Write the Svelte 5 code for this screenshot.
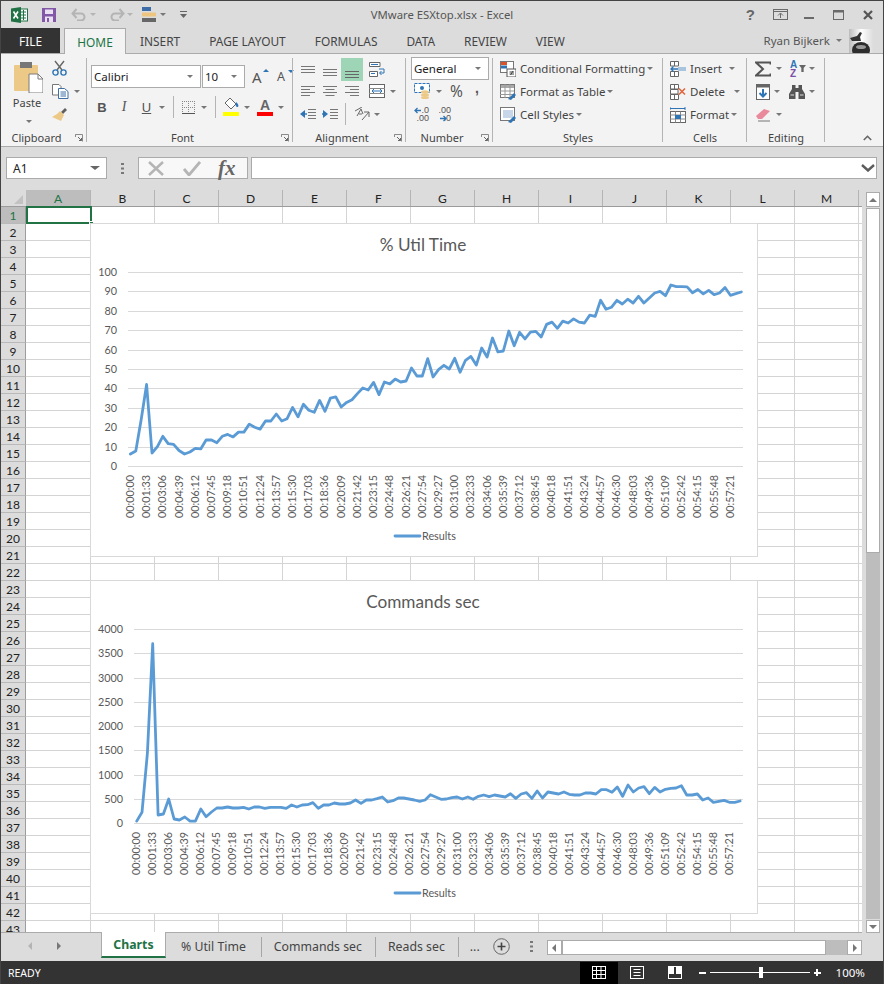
<script>
  const util = [6.2,7.7,24,42,6.7,10,15.3,11.5,11.2,8,6.2,7.2,9.1,8.8,13.4,13.4,12,15.3,16.3,15,17.5,17.5,21.6,20,19,23.2,23.2,26.8,23.2,24.4,30.2,25.3,31.8,28.7,27.7,33.8,28.2,35,35.6,30.4,32.8,34.2,37.3,40.2,39.2,43.1,36.8,43.3,42.3,44.8,43.3,43.8,50.5,46.4,46.4,55.3,45.9,49.7,51.9,50,55.5,48.3,54.5,56.5,52,60.8,56.2,66,58.8,59.3,69.6,62,68.9,65.5,69,69.4,66.5,73,74.2,71,74.7,73.7,75.8,74.2,73.7,77.8,77.1,85.4,80.8,81.8,85.4,83.5,86,84,87.5,84,86.6,89.2,90,87.8,93.3,92.4,92.4,92.3,89.3,91,88.7,90.5,88.3,89.2,92,88,88.8,89.7];
  const cmds = [40,220,1440,3697,165,185,495,82,62,124,40,40,288,130,227,309,309,330,309,309,323,288,330,330,302,323,323,323,302,371,330,371,378,420,302,371,371,412,392,392,412,474,405,474,474,501,536,433,460,515,515,495,474,447,474,584,536,488,495,522,536,495,536,488,550,577,543,577,556,536,605,508,598,625,508,660,515,639,618,598,639,591,577,577,618,618,598,687,687,632,742,550,783,639,721,749,605,735,639,694,714,721,769,577,577,598,474,515,426,447,467,426,426,453];

  const pad = (n) => String(n).padStart(2, '0');
  const times = Array.from({ length: 38 }, (_, i) => {
    const s = i * 93;
    return `00:${pad(Math.floor(s / 60))}:${pad(s % 60)}`;
  });

  function chart(title, data, max, step, x0, x1, first, dx, zeroY, span, axisRight) {
    const px = (i) => first + dx * i;
    const py = (v) => zeroY - (v / max) * span;
    const ticks = [];
    for (let v = 0; v <= max; v += step) ticks.push({ v, y: Math.round(py(v)) + 0.5 });
    return {
      title, x0, x1, axisRight, zeroY, ticks,
      points: data.map((v, i) => `${px(i).toFixed(1)},${py(v).toFixed(1)}`).join(' '),
      labels: times.map((t, i) => ({ t, x: px(i * 3) + 3.5 }))
    };
  }

  const c1 = chart('% Util Time', util, 100, 10, 37, 652, 39.4, 5.405, 242, 194, 26);
  const c2 = chart('Commands sec', cmds, 4000, 500, 43, 652, 45.7, 5.34, 242, 194, 32);

  const cols = ['A','B','C','D','E','F','G','H','I','J','K','L','M'];
  const rows = Array.from({ length: 43 }, (_, i) => i + 1);
</script>

{#snippet plot(c)}
  <svg class="plot" width="666" height="332" viewBox="0 0 666 332">
    <text class="ctitle" x="332" y="27" text-anchor="middle">{c.title}</text>
    {#each c.ticks as t}
      <line class="gl" x1={c.x0} x2={c.x1} y1={t.y} y2={t.y} />
      <text class="tick" x={c.axisRight} y={t.y + 3.5} text-anchor="end">{t.v}</text>
    {/each}
    <polyline class="series" points={c.points} />
    {#each c.labels as l}
      <text class="tick" text-anchor="end" transform="translate({l.x} 251) rotate(-90)">{l.t}</text>
    {/each}
    <line class="leg" x1="304" x2="329" y1="312" y2="312" />
    <text class="tick" x="331" y="316">Results</text>
  </svg>
{/snippet}

{#snippet launcher()}
  <svg class="launch" width="8" height="8" viewBox="0 0 8 8"><path d="M.5 .5H7.5V7.5M.5 .5V3M.5 .5H3" fill="none" stroke="#8a8a8a"/><path d="M3 3L6.5 6.5M4 6.5H6.5V4" fill="none" stroke="#666"/></svg>
{/snippet}

<div class="win">
  <header class="titlebar">
    <div class="qat">
      <svg width="17" height="16" viewBox="0 0 17 16"><rect x="8" y="2" width="8.5" height="12" fill="#fff" stroke="#207245"/><path d="M10 5h5M10 8h5M10 11h5M12.5 3v10" stroke="#207245"/><path d="M0 1.6L10 0V16L0 14.4z" fill="#207245"/><path d="M2.5 4.5L7 11.5M7 4.5L2.5 11.5" stroke="#fff" stroke-width="1.6"/></svg>
      <svg class="ml14" width="14" height="14" viewBox="0 0 14 14"><rect width="14" height="14" fill="#8257a8"/><rect x="3" y="1.5" width="8" height="4.5" fill="#e9e0f1"/><rect x="3" y="8.5" width="8" height="5.5" fill="#e9e0f1"/><rect x="5" y="10" width="2" height="4" fill="#8257a8"/></svg>
      <svg class="ml15" width="15" height="13" viewBox="0 0 15 13"><path d="M2 5.5H10a3.5 3.5 0 0 1 0 7H6M5.5 1L1.5 5.5L5.5 10" fill="none" stroke="#b4b4b4" stroke-width="2"/></svg>
      <span class="caret light ml4"></span>
      <svg class="ml14" width="15" height="13" viewBox="0 0 15 13"><path d="M13 5.5H5a3.5 3.5 0 0 0 0 7H9M9.5 1L13.5 5.5L9.5 10" fill="none" stroke="#b4b4b4" stroke-width="2"/></svg>
      <span class="caret light ml2"></span>
      <svg class="ml9" width="14" height="15" viewBox="0 0 14 15"><rect width="9" height="4" fill="#3e6da8"/><rect y="5.5" width="14" height="4" fill="#eec57e"/><rect y="11" width="14" height="4" fill="#666"/></svg>
      <span class="caret ml4"></span>
      <svg class="ml14" width="7" height="7" viewBox="0 0 7 7"><path d="M0 .5H7" stroke="#666"/><path d="M0 3H7L3.5 7z" fill="#666"/></svg>
    </div>
    <div class="doc">VMware ESXtop.xlsx - Excel</div>
    <div class="winbtns">
      <span class="help">?</span>
      <svg class="restore" width="15" height="11" viewBox="0 0 15 11"><rect x=".5" y=".5" width="14" height="10" fill="none" stroke="#6a6a6a"/><path d="M.5 2.5H14.5" stroke="#6a6a6a"/><path d="M7.5 9V4.5M5 6.5L7.5 4L10 6.5" fill="none" stroke="#6a6a6a"/></svg>
      <svg width="10" height="10" viewBox="0 0 10 10"><rect y="7" width="10" height="2" fill="#6a6a6a"/></svg>
      <svg width="11" height="10" viewBox="0 0 11 10"><rect x=".5" y=".5" width="10" height="9" fill="none" stroke="#6a6a6a"/><rect width="11" height="2.5" fill="#6a6a6a"/></svg>
      <svg width="10" height="10" viewBox="0 0 10 10"><path d="M1 1L9 9M9 1L1 9" stroke="#555" stroke-width="2.2"/></svg>
    </div>
  </header>

  <nav class="tabs">
    <span class="file">FILE</span>
    <span class="home">HOME</span>
    <span class="tab first">INSERT</span>
    <span class="tab">PAGE LAYOUT</span>
    <span class="tab">FORMULAS</span>
    <span class="tab">DATA</span>
    <span class="tab">REVIEW</span>
    <span class="tab">VIEW</span>
    <span class="user">Ryan Bijkerk</span>
    <span class="caret ml6"></span>
    <svg class="avatar" width="24" height="24" viewBox="0 0 24 24">
      <defs><linearGradient id="av" x1="0" x2="1"><stop offset="0" stop-color="#bbb"/><stop offset=".5" stop-color="#fff"/><stop offset="1" stop-color="#ddd"/></linearGradient></defs>
      <rect width="24" height="24" fill="url(#av)"/>
      <ellipse cx="12" cy="21" rx="9" ry="8" fill="#2d2d2d"/>
      <ellipse cx="12" cy="18" rx="5" ry="2" fill="#999"/>
      <path d="M1 9L8 7L11 3L13 4L11 8L12 12L3 12z" fill="#333"/>
    </svg>
  </nav>

  <section class="ribbon">
    <div class="group clip">
      <div class="clipbody">
        <div class="paste">
          <svg width="29" height="31" viewBox="0 0 29 31"><rect y="3" width="24" height="26" rx="1" fill="#edc987"/><rect x="6" y="0" width="12" height="6" fill="#777"/><path d="M15 12H24L29 17V31H15z" fill="#fff" stroke="#7a7a7a"/><path d="M24 12V17H29" fill="none" stroke="#7a7a7a"/></svg>
          <span class="pastelabel">Paste</span>
          <span class="caret"></span>
        </div>
        <div class="clipsmall">
          <svg width="15" height="16" viewBox="0 0 15 16"><path d="M3 1L10 10M12 1L5 10" stroke="#666" stroke-width="1.4"/><circle cx="3.5" cy="12.5" r="2.6" fill="none" stroke="#2f75b5" stroke-width="1.4"/><circle cx="11.5" cy="12.5" r="2.6" fill="none" stroke="#2f75b5" stroke-width="1.4"/></svg>
          <div class="row4"><svg width="17" height="15" viewBox="0 0 17 15"><path d="M.5 .5H7L9 2.5V11H.5z" fill="#fff" stroke="#777"/><path d="M6.5 4.5H12.5L16 7.5V14.5H6.5z" fill="#fff" stroke="#3f6ea5"/><path d="M8.5 8H14M8.5 10H14M8.5 12H14" stroke="#3f6ea5"/></svg><span class="caret ml5"></span></div>
          <svg width="16" height="14" viewBox="0 0 16 14"><path d="M9 5L13 1L15 3L11 7z" fill="#5f5f5f"/><path d="M8 4L12 8L9 14L0 10L5 7z" fill="#edc987"/></svg>
        </div>
      </div>
      <div class="glabel lg">Clipboard</div>
      {@render launcher()}
    </div>

    <div class="group font">
      <div class="frow1">
        <div class="combo w110"><span>Calibri</span><span class="caret"></span></div>
        <div class="combo w43"><span>10</span><span class="caret"></span></div>
        <span class="growa ml6">A<i class="up"></i></span>
        <span class="growa small ml10">A<i class="down"></i></span>
      </div>
      <div class="frow2">
        <span class="fmt b">B</span><span class="fmt it">I</span><span class="fmt u">U</span>
        <span class="caret ml1"></span>
        <span class="vsep s8"></span>
        <svg class="ml8" width="13" height="13" viewBox="0 0 13 13"><path d="M.5 0V13M6.5 0V13M12.5 0V13M0 .5H13M0 6.5H13" stroke="#888" stroke-dasharray="1 1"/><path d="M0 12.5H13" stroke="#555"/></svg>
        <span class="caret ml6"></span>
        <span class="vsep s8"></span>
        <div class="colorbtn ml7">
          <svg width="16" height="12" viewBox="0 0 16 12"><path d="M2 5L7 0L13 6L8 11z" fill="#fff" stroke="#666"/><path d="M13 4c2 2 3 3 2 5c-2 0-3-1-2-5z" fill="#2f75b5"/></svg>
          <i class="bar yellow"></i>
        </div>
        <span class="caret ml5"></span>
        <div class="colorbtn ml7">
          <span class="fa">A</span>
          <i class="bar red"></i>
        </div>
        <span class="caret ml5"></span>
      </div>
      <div class="glabel lg">Font</div>
      {@render launcher()}
    </div>

    <div class="group align">
      <div class="agrid">
        <svg width="14" height="8" viewBox="0 0 14 8"><path d="M0 .5H14M0 3.5H14M0 6.5H14" stroke="#777"/></svg>
        <svg class="mid" width="14" height="8" viewBox="0 0 14 8"><path d="M0 .5H14M0 3.5H14M0 6.5H14" stroke="#777"/></svg>
        <span class="hl"><svg width="14" height="8" viewBox="0 0 14 8"><path d="M0 .5H14M0 3.5H14M0 6.5H14" stroke="#666"/></svg></span>
        <svg width="17" height="15" viewBox="0 0 17 15"><path d="M.5 .5H11V4.5H.5zM.5 9.5H8.5V14.5H.5z" fill="#fff" stroke="#666"/><path d="M2 2.5H9M2 11.5H6" stroke="#2f75b5"/><path d="M10 7H15V11H11M12.5 9L10.5 11L12.5 13" fill="none" stroke="#2f75b5"/></svg>
      </div>
      <div class="agrid r2">
        <svg width="14" height="11" viewBox="0 0 14 11"><path d="M0 .5H14M0 3.5H9M0 6.5H14M0 9.5H9" stroke="#777"/></svg>
        <svg width="14" height="11" viewBox="0 0 14 11"><path d="M0 .5H14M2.500 3.5H11.500M0 6.5H14M2.500 9.500H11.500" stroke="#777"/></svg>
        <svg width="14" height="11" viewBox="0 0 14 11"><path d="M0 .5H14M5 3.5H14M0 6.5H14M5 9.5H14" stroke="#777"/></svg>
        <div class="row4"><svg width="16" height="14" viewBox="0 0 16 14"><rect x=".5" y=".5" width="15" height="13" fill="#fff" stroke="#666"/><path d="M0 4.500H16M0 9.500H16" stroke="#888"/><rect x="1" y="5" width="14" height="4" fill="#fff"/><path d="M3 7H13" stroke="#2f75b5"/><path d="M5 5L3 7L5 9M11 5L13 7L11 9" fill="none" stroke="#2f75b5"/></svg><span class="caret ml5"></span></div>
      </div>
      <div class="agrid r3">
        <svg width="16" height="10" viewBox="0 0 16 10"><path d="M0 5L5 1V9z" fill="#2f75b5"/><path d="M3 5H7" stroke="#2f75b5" stroke-width="1.4"/><path d="M8 .5H16M8 3.500H16M8 6.500H16M8 9.500H16" stroke="#777"/></svg>
        <svg width="16" height="10" viewBox="0 0 16 10"><path d="M6 5L1 1V9z" fill="#2f75b5"/><path d="M3 5H0" stroke="#2f75b5" stroke-width="1.4"/><path d="M8 .5H16M8 3.500H16M8 6.500H16M8 9.500H16" stroke="#777"/></svg>
        <span class="vsep tall"></span>
        <div class="row4"><svg width="18" height="14" viewBox="0 0 18 14"><path d="M2 4L9 0M4 9L8 2L10 7M6 7H9" fill="none" stroke="#666"/><path d="M9 13L16 5M11 5H16V10" fill="none" stroke="#666"/></svg><span class="caret ml3"></span></div>
      </div>
      <div class="glabel lg">Alignment</div>
      {@render launcher()}
    </div>

    <div class="group num">
      <div class="combo w78"><span>General</span><span class="caret"></span></div>
      <div class="nrow">
        <svg width="17" height="16" viewBox="0 0 17 16"><rect x=".5" y=".5" width="15" height="9" fill="#fff" stroke="#2f75b5" stroke-dasharray="3 1"/><circle cx="8" cy="5" r="2" fill="#2f75b5"/><ellipse cx="11" cy="9" rx="4" ry="1.7" fill="#edc987"/><ellipse cx="11" cy="12" rx="4" ry="1.7" fill="#edc987"/><ellipse cx="11" cy="14.500" rx="4" ry="1.500" fill="#edc987"/></svg>
        <span class="caret ml5"></span>
        <span class="pct">%</span>
        <span class="comma">,</span>
      </div>
      <div class="nrow r3">
        <div class="dec">.0<br />.00<svg width="7" height="7" viewBox="0 0 7 7"><path d="M7 3.500H1M3.500 1L1 3.500L3.500 6" fill="none" stroke="#2f75b5" stroke-width="1.3"/></svg></div>
        <div class="dec two">.00<br />.0<svg width="7" height="7" viewBox="0 0 7 7"><path d="M0 3.500H6M3.500 1L6 3.500L3.500 6" fill="none" stroke="#2f75b5" stroke-width="1.3"/></svg></div>
      </div>
      <div class="glabel lg">Number</div>
      {@render launcher()}
    </div>

    <div class="group styles">
      <div class="lrow">
        <svg width="16" height="16" viewBox="0 0 16 16"><rect x=".5" y=".5" width="13" height="11" fill="#fff" stroke="#777"/><rect x="1" y="1" width="6" height="3" fill="#d9542b"/><rect x="1" y="4.500" width="6" height="3" fill="#2f75b5"/><rect x="7" y="8" width="9" height="8" fill="#fff" stroke="#555"/><path d="M9.500 11H14M9.500 13H14M13 10L10.500 14" stroke="#444"/></svg>
        <span>Conditional Formatting</span><span class="caret"></span>
      </div>
      <div class="lrow">
        <svg width="16" height="16" viewBox="0 0 16 16"><rect x=".5" y=".5" width="14" height="13" fill="#fff" stroke="#777"/><rect x="1" y="1" width="13" height="3" fill="#a9a9a9"/><path d="M5 0V14M10 0V14M0 7H14M0 10.500H14" stroke="#999"/><path d="M8 15L14 9L16 11L11 16z" fill="#2f75b5"/></svg>
        <span>Format as Table</span><span class="caret"></span>
      </div>
      <div class="lrow">
        <svg width="16" height="16" viewBox="0 0 16 16"><rect x=".5" y=".5" width="14" height="13" fill="#fff" stroke="#777"/><rect x="3" y="3" width="10" height="8" fill="#c7d6e8"/><path d="M8 15L14 9L16 11L11 16z" fill="#2f75b5"/></svg>
        <span>Cell Styles</span><span class="caret"></span>
      </div>
      <div class="glabel">Styles</div>
    </div>

    <div class="group cells">
      <div class="lrow">
        <svg width="16" height="16" viewBox="0 0 16 16"><path d="M.5 .5H8.500V5H.5zM.5 10.500H8.500V15.500H.5zM4.500 .5V5M4.500 10.500V15.500" fill="#fff" stroke="#666"/><rect x="8" y="6" width="8" height="4" fill="#a9c4df"/><path d="M8 8H1M3.500 5.500L1 8L3.500 10.500" fill="none" stroke="#2f75b5" stroke-width="1.300"/></svg>
        <span>Insert</span><span class="caret c-ins"></span>
      </div>
      <div class="lrow">
        <svg width="16" height="16" viewBox="0 0 16 16"><path d="M.5 .5H8.500V5H.5zM.5 10.500H8.500V15.500H.5zM4.500 .5V5M4.500 10.500V15.500M.5 5.500H8V10H.5z" fill="#fff" stroke="#666"/><path d="M9 4.500L15 10.500M15 4.500L9 10.500" stroke="#e0663d" stroke-width="1.600"/></svg>
        <span>Delete</span><span class="caret c-del"></span>
      </div>
      <div class="lrow">
        <svg width="16" height="16" viewBox="0 0 16 16"><path d="M0 1.500H15M0 0V3M15 0V3" stroke="#2f75b5"/><rect x=".5" y="4.500" width="15" height="11" fill="#fff" stroke="#666"/><path d="M5.500 4.500V15.500M10.500 4.500V15.500M0 8H16M0 12H16" stroke="#888"/><rect x="5" y="8" width="6" height="4" fill="#2f75b5"/></svg>
        <span>Format</span><span class="caret"></span>
      </div>
      <div class="glabel">Cells</div>
    </div>

    <div class="group edit">
      <div class="erow">
        <svg width="16" height="16" viewBox="0 0 16 16"><path d="M15.500 3.500V1.500H1L8 8L1 14.500H15.500V12.500" fill="none" stroke="#555" stroke-width="2"/></svg>
        <span class="caret ml5"></span>
        <div class="sort ml8"><span class="az a">A</span><span class="az z">Z</span></div>
        <svg class="ml1" width="7" height="7" viewBox="0 0 9 9"><path d="M0 0H9L6 4V9H3V4z" fill="#666"/></svg>
        <span class="caret ml3"></span>
      </div>
      <div class="erow">
        <svg class="ml1" width="14" height="16" viewBox="0 0 14 16"><rect x=".5" y=".5" width="13" height="15" fill="#fff" stroke="#666"/><rect x="1" y="1" width="12" height="2.500" fill="#666"/><path d="M7 5V12M3.500 9L7 12.500L10.500 9" fill="none" stroke="#2f75b5" stroke-width="2"/></svg>
        <span class="caret ml4"></span>
        <svg class="ml9" width="16" height="14" viewBox="0 0 16 14"><path d="M3 0H6.500V3H9.500V0H13V4L16 9V14H9.500V7H6.500V14H0V9L3 4z" fill="#555"/><path d="M1.500 10H5M11 10H14.500" stroke="#ddd"/></svg>
        <span class="caret ml4"></span>
      </div>
      <div class="erow">
        <svg class="ml1" width="15" height="14" viewBox="0 0 15 14"><path d="M0 8L8 1L14 3L6 11H2z" fill="#e9899b"/><path d="M2 13H14" stroke="#777"/></svg>
        <span class="caret ml5"></span>
      </div>
      <div class="glabel">Editing</div>
    </div>

    <svg class="collapse" width="9" height="6" viewBox="0 0 9 6"><path d="M.8 5L4.500 1.300L8.200 5" fill="none" stroke="#666" stroke-width="1.600"/></svg>
  </section>

  <section class="fbar">
    <div class="namebox"><span>A1</span><span class="caret big"></span></div>
    <svg class="dots" width="3" height="11" viewBox="0 0 3 11"><path d="M0 0h3v2h-3zM0 4.500h3v2h-3zM0 9h3v2h-3z" fill="#777"/></svg>
    <div class="fxbox">
      <svg width="16" height="15" viewBox="0 0 16 15"><path d="M1 1L15 14M15 1L1 14" stroke="#b5b5b5" stroke-width="2.500"/></svg>
      <svg width="18" height="15" viewBox="0 0 18 15"><path d="M1 8L6 14L17 1" fill="none" stroke="#b5b5b5" stroke-width="2.800"/></svg>
      <span class="fx">fx</span>
    </div>
    <div class="finput"><svg width="14" height="8" viewBox="0 0 14 8"><path d="M1 1L7 6.500L13 1" fill="none" stroke="#5c5c5c" stroke-width="2.400"/></svg></div>
  </section>

  <section class="sheet">
    <div class="main">
      <div class="colhead">
        <div class="corner"><i></i></div>
        {#each cols as c, i}
          <div class="ch" class:sel={i === 0}>{c}</div>
        {/each}
        <div class="ch rest"></div>
      </div>
      <div class="body">
        {#each rows as r}
          <div class="row">
            <div class="rh" class:sel={r === 1}>{r}</div>
            {#each cols as c, i}
              <div class="cell" class:cola={i === 0}></div>
            {/each}
            <div class="cell rest"></div>
          </div>
        {/each}
        <div class="active"><i></i></div>
        <div class="chartbox one">{@render plot(c1)}</div>
        <div class="chartbox two">{@render plot(c2)}</div>
      </div>
    </div>
    <div class="vscroll">
      <div class="vbtn"><i class="tri-up"></i></div>
      <div class="vtrack"><div class="vthumb"></div></div>
      <div class="vbtn low"><i class="tri-down"></i></div>
    </div>
  </section>

  <section class="sheetbar">
    <i class="tri-left pale"></i>
    <i class="tri-right dark"></i>
    <span class="stab active-tab">Charts</span>
    <span class="stab util">% Util Time</span>
    <span class="stab sep">Commands sec</span>
    <span class="stab sep">Reads sec</span>
    <span class="stab sep more">...</span>
    <svg class="plus" width="17" height="17" viewBox="0 0 17 17"><circle cx="8.500" cy="8.500" r="7.800" fill="none" stroke="#666"/><path d="M8.500 4.500V12.500M4.500 8.500H12.500" stroke="#444" stroke-width="1.600"/></svg>
    <svg class="hdots" width="3" height="11" viewBox="0 0 3 11"><path d="M0 0h3v2h-3zM0 4.500h3v2h-3zM0 9h3v2h-3z" fill="#777"/></svg>
    <div class="hscroll">
      <div class="hbtn"><i class="tri-left dark"></i></div>
      <div class="hthumb"></div>
      <div class="htrack"></div>
      <div class="hbtn"><i class="tri-right dark"></i></div>
    </div>
  </section>

  <footer class="status">
    <span class="ready">READY</span>
    <div class="view on"><svg width="14" height="13" viewBox="0 0 14 13"><path d="M.5 0V13M4.500 0V13M9 0V13M13.500 0V13M0 .5H14M0 4.500H14M0 8.500H14M0 12.500H14" stroke="#fff"/></svg></div>
    <div class="view"><svg width="14" height="13" viewBox="0 0 14 13"><rect x=".5" y=".5" width="13" height="12" fill="none" stroke="#fff"/><path d="M3.500 3.500H10.500M3.500 6.500H10.500M3.500 9.500H10.500" stroke="#fff"/></svg></div>
    <div class="view"><svg width="14" height="13" viewBox="0 0 14 13"><rect x=".5" y=".5" width="13" height="12" fill="none" stroke="#fff"/><path d="M1 0H6V8H1zM8 0H13V8H8z" fill="#fff"/></svg></div>
    <div class="zoomer">
      <span class="zb minus"></span>
      <div class="slider"><i></i></div>
      <span class="zb plusz"></span>
    </div>
    <span class="pctz">100%</span>
  </footer>
</div>

<style>
  :global(body) { margin: 0; background: #fff; }
  .win {
    width: 884px; height: 984px; box-sizing: border-box; overflow: hidden;
    display: flex; flex-direction: column; background: #dcdcdc;
    border: 1px solid #444; border-width: 1px 1px 0 1px;
    font-family: "Noto Sans", "Open Sans", sans-serif; font-size: 11.5px; color: #444;
  }
  svg { display: block; flex: none; }
  .ml1 { margin-left: 1px; } .ml2 { margin-left: 2px; } .ml3 { margin-left: 3px; } .ml4 { margin-left: 4px; }
  .ml5 { margin-left: 5px; } .ml6 { margin-left: 6px; } .ml7 { margin-left: 7px; } .ml8 { margin-left: 8px; }
  .ml9 { margin-left: 9px; } .ml10 { margin-left: 10px; } .ml14 { margin-left: 14px; } .ml15 { margin-left: 15px; }
  .caret { display: inline-block; flex: none; width: 0; height: 0; border: 3px solid transparent; border-top: 3px solid #777; border-bottom: 0; }
  .caret.light { border-top-color: #b4b4b4; }
  .caret.big { border-width: 4px 5px 0; border-top-color: #666; }

  .titlebar { height: 27px; display: grid; grid-template-columns: 1fr auto 1fr; align-items: center; flex: none; }
  .qat { display: flex; align-items: center; padding-left: 10px; }
  .doc { font-size: 11.3px; color: #555; }
  .winbtns { display: flex; align-items: center; justify-content: flex-end; gap: 19px; padding-right: 10px; }
  .help { font: bold 15px "Liberation Sans", sans-serif; color: #666; margin-right: -1px; }
  .restore { margin-right: -3px; }

  .tabs { height: 25px; display: flex; align-items: center; flex: none; font-size: 11.9px; color: #444; position: relative; z-index: 1; }
  .file { width: 59px; height: 25px; background: #333; color: #fff; display: flex; align-items: center; justify-content: center; }
  .home { width: 60px; height: 25px; margin-left: 4px; margin-bottom: -1px; box-sizing: content-box; background: #f3f3f3; color: #217346; display: flex; align-items: center; justify-content: center; border: 1px solid #ababab; border-bottom: 0; }
  .tab { margin-left: 29px; white-space: nowrap; }
  .tab.first { margin-left: 14px; }
  .user { margin-left: auto; color: #555; font-size: 11.5px; }
  .avatar { margin: 0 10px 0 7px; }

  .ribbon { height: 92px; box-sizing: content-box; flex: none; display: flex; padding-top: 0; background: #f3f3f3; border-top: 1px solid #ababab; border-bottom: 1px solid #ababab; position: relative; color: #444; }
  .group { position: relative; box-sizing: border-box; height: 92px; padding-top: 4px; flex: none; }
  .group::after { content: ""; position: absolute; right: 0; top: 4px; height: 84px; width: 1px; background: #b4b4b4; }
  .glabel { position: absolute; left: 0; right: 0; bottom: 0; height: 16px; line-height: 16px; text-align: center; font-size: 11px; color: #444; }
  .glabel.lg { right: 15px; }
  .launch { position: absolute; right: 4px; bottom: 4px; }
  .row4 { display: flex; align-items: center; }
  .vsep { display: block; flex: none; width: 1px; background: #b4b4b4; height: 22px; }
  .vsep.s8 { margin-left: 8px; }

  .clip { width: 86px; }
  .clipbody { display: flex; padding: 4px 0 0 13px; }
  .paste { width: 29px; display: flex; flex-direction: column; align-items: center; }
  .pastelabel { margin: 0 3px 0 0; line-height: 20px; font-size: 11px; }
  .paste .caret { margin-top: 7px; }
  .clipsmall { margin: -2px 0 0 9px; display: flex; flex-direction: column; gap: 8px; }

  .font { width: 206px; padding-left: 4px; }
  .frow1 { display: flex; align-items: center; margin-top: 7px; gap: 1px; }
  .combo { box-sizing: border-box; height: 23px; background: #fff; border: 1px solid #ababab; display: flex; align-items: center; justify-content: space-between; padding: 0 7px 0 2px; font-size: 11.5px; color: #222; }
  .w110 { width: 110px; } .w43 { width: 43px; } .w78 { width: 78px; }
  .growa { position: relative; font-size: 15px; color: #555; width: 14px; }
  .growa.small { font-size: 12.5px; }
  .growa i { position: absolute; right: -3px; top: 2px; border: 3px solid transparent; }
  .growa i.up { border-bottom: 3px solid #2f75b5; border-top: 0; }
  .growa i.down { border-top: 3px solid #2f75b5; border-bottom: 0; }
  .frow2 { display: flex; align-items: center; height: 22px; margin-top: 8px; padding-left: 0; }
  .fmt { width: 22px; text-align: center; color: #555; font-size: 13px; font-family: "Liberation Sans", sans-serif; }
  .fmt.b { font-weight: bold; }
  .fmt.it { font-family: "Liberation Serif", serif; font-style: italic; font-size: 14px; }
  .fmt.u { text-decoration: underline; width: 23px; }
  .colorbtn { width: 16px; display: flex; flex-direction: column; align-items: center; }
  .bar { display: block; width: 16px; height: 4px; }
  .yellow { background: #ffff00; margin-top: 2px; } .red { background: #ff0000; }
  .fa { font: bold 14px/14px "Liberation Sans", sans-serif; color: #666; }

  .align { width: 113px; }
  .agrid { display: flex; align-items: center; height: 23px; padding-left: 8px; }
  .agrid > :nth-child(2) { margin-left: 8px; }
  .agrid > :nth-child(3) { margin-left: 8px; }
  .agrid > :nth-child(4) { margin-left: 10px; }
  .agrid .mid { margin-top: 6px; }
  .agrid .hl { margin: 0 0 0 4px !important; width: 22px; height: 23px; background: #9fd5b7; display: flex; align-items: flex-end; justify-content: center; padding-bottom: 2px; box-sizing: border-box; }
  .agrid .hl + svg { margin-left: 6px !important; }
  .agrid.r2 { margin-top: 3px; height: 14px; }
  .agrid.r3 { margin-top: 8px; height: 16px; padding-left: 7px; }
  .agrid.r3 > :nth-child(2) { margin-left: 6px; }
  .agrid.r3 > :nth-child(3) { margin-left: 7px; height: 22px; }
  .agrid.r3 > :nth-child(4) { margin-left: 7px; }

  .num { width: 87px; padding-left: 5px; }
  .num .combo { margin-top: -1px; }
  .nrow { display: flex; align-items: center; margin: 3px 0 0 3px; height: 16px; }
  .nrow.r3 { margin-top: 7px; height: 16px; gap: 7px; }
  .pct { font-size: 15.5px; color: #555; margin-left: 8px; }
  .comma { font: bold 14px "Liberation Sans", sans-serif; color: #555; margin: -6px 0 0 12px; }
  .dec { position: relative; width: 15px; height: 16px; font: 9px/8px "Liberation Sans", sans-serif; color: #555; text-align: right; }
  .dec svg { position: absolute; left: 0; top: 1px; }
  .dec.two svg { top: 9px; left: 4px; }

  .styles { width: 170px; padding-left: 7px; }
  .cells { width: 84px; padding-left: 7px; }
  .lrow { display: flex; align-items: center; gap: 4px; height: 17px; margin-bottom: 6px; white-space: nowrap; font-size: 11.5px; }
  .lrow:first-child { margin-top: 2px; }
  .lrow .caret { margin-left: -2px; }
  .lrow .caret.c-ins { margin-left: 3px; }
  .lrow .caret.c-del { margin-left: 5px; }

  .edit { width: 78px; padding-left: 8px; }
  .erow { display: flex; align-items: center; height: 17px; margin-bottom: 6px; }
  .erow:first-child { margin-top: 2px; }
  .sort { position: relative; width: 8px; height: 18px; font: bold 10px/9px "Liberation Sans", sans-serif; }
  .az { display: block; }
  .a { color: #2f75b5; } .z { color: #7b4fa6; }
  .collapse { position: absolute; right: 11px; top: 81px; }

  .fbar { height: 43px; flex: none; box-sizing: border-box; display: flex; align-items: flex-start; padding: 10px 6px 0 5px; }
  .namebox { width: 101px; height: 22px; box-sizing: border-box; background: #fff; border: 1px solid #ababab; display: flex; align-items: center; justify-content: space-between; padding: 0 6px; font-size: 12px; color: #222; }
  .dots { margin: 6px 0 0 14px; }
  .fxbox { margin-left: 14px; width: 110px; height: 22px; box-sizing: border-box; background: #f8f8f8; border: 1px solid #ababab; display: flex; align-items: center; padding-left: 9px; gap: 19px; }
  .fx { font: italic bold 21px/18px "Liberation Serif", serif; color: #666; margin-left: -2px; }
  .finput { margin-left: 3px; flex: 1; height: 22px; box-sizing: border-box; background: #fff; border: 1px solid #ababab; display: flex; align-items: center; justify-content: flex-end; padding-right: 1px; }

  .sheet { flex: 1; min-height: 0; display: flex; overflow: hidden; }
  .main { width: 861px; flex: none; background: #fff; overflow: hidden; border-bottom: 1px solid #ababab; box-sizing: border-box; }
  .colhead { display: flex; height: 17px; background: #dcdcdc; border-bottom: 1px solid #9c9c9c; box-sizing: border-box; }
  .corner { width: 25px; flex: none; position: relative; }
  .corner i { position: absolute; right: 3px; bottom: 2px; border-style: solid; border-width: 0 0 9px 9px; border-color: transparent transparent #c2c2c2; }
  .ch { width: 64px; flex: none; box-sizing: border-box; text-align: center; font: 12px/17px "Lato", sans-serif; color: #222; border-right: 1px solid #b4b4b4; }
  .ch.sel { width: 65px; background: #bdbdbd; color: #217346; }
  .ch.rest { width: 4px; border: 0; }
  .body { position: relative; }
  .row { display: flex; height: 17px; }
  .rh { width: 25px; flex: none; box-sizing: border-box; background: #dcdcdc; border-bottom: 1px solid #b9b9b9; font: 12px/17px "Lato", sans-serif; color: #222; text-align: center; border-right: 1px solid #9c9c9c; }
  .rh.sel { background: #bdbdbd; color: #217346; }
  .cell { width: 64px; flex: none; box-sizing: border-box; border-right: 1px solid #d4d4d4; border-bottom: 1px solid #d4d4d4; }
  .cell.cola { width: 65px; }
  .cell.rest { width: 4px; border-right: 0; }
  .active { position: absolute; left: 25px; top: -1px; width: 66px; height: 18px; box-sizing: border-box; border: 2px solid #217346; }
  .active i { position: absolute; right: -4px; bottom: -4px; width: 3px; height: 3px; background: #217346; border: 1px solid #fff; }
  .chartbox { position: absolute; left: 89px; width: 668px; height: 334px; box-sizing: border-box; background: #fff; border: 1px solid #d9d9d9; }
  .chartbox.one { top: 16px; }
  .chartbox.two { top: 373px; }
  .plot { font-family: "Lato", sans-serif; }
  .ctitle { font-size: 17.2px; fill: #595959; }
  .tick { font-size: 10.8px; fill: #595959; }
  .gl { stroke: #d9d9d9; stroke-width: 1; }
  .series { fill: none; stroke: #5b9bd5; stroke-width: 2.8; stroke-linejoin: round; stroke-linecap: round; }
  .leg { stroke: #5b9bd5; stroke-width: 2.8; stroke-linecap: round; }

  .vscroll { flex: none; width: 14px; margin-left: 4px; padding-top: 2px; display: flex; flex-direction: column; gap: 1px; }
  .vbtn { height: 15px; background: #fff; border: 1px solid #ababab; box-sizing: border-box; display: flex; align-items: center; justify-content: center; }
  .vbtn.low { height: 13px; }
  .vtrack { flex: 1; background: #bdbdbd; }
  .vthumb { height: 345px; background: #fff; border: 1px solid #ababab; box-sizing: border-box; }
  .tri-up { border: 4px solid transparent; border-bottom: 4px solid #777; border-top: 0; }
  .tri-down { border: 4px solid transparent; border-top: 4px solid #777; border-bottom: 0; }
  .tri-left { display: block; flex: none; border: 4px solid transparent; border-right: 4px solid #777; border-left: 0; }
  .tri-right { display: block; flex: none; border: 4px solid transparent; border-left: 4px solid #777; border-right: 0; }
  .pale { border-right-color: #b4b4b4; }

  .sheetbar { height: 28px; flex: none; display: flex; align-items: flex-start; box-sizing: border-box; font-size: 12.3px; color: #444; }
  .sheetbar > .tri-left { margin: 9px 0 0 27px; }
  .sheetbar > .tri-right { margin: 9px 0 0 25px; }
  .stab { height: 24px; margin-top: 1px; display: flex; align-items: center; padding: 0 13px; box-sizing: border-box; position: relative; white-space: nowrap; }
  .stab.util { padding: 0 15px; }
  .stab.sep::before { content: ""; position: absolute; left: 0; top: 3px; height: 20px; width: 1px; background: #a6a6a6; }
  .active-tab { margin: -1px 0 0 40px; width: 65px; height: 26px; padding: 1px 0 0; justify-content: center; background: #fff; color: #217346; font-weight: bold; border: 1px solid #ababab; border-top: 0; border-bottom: 2px solid #217346; }
  .stab.more { width: 35px; padding: 0 0 0 12px; }
  .plus { margin: 5px 0 0 0; }
  .hdots { margin: 8px 0 0 20px; }
  .hscroll { margin: 7px 21px 0 14px; flex: 1; height: 15px; display: flex; box-sizing: border-box; }
  .hbtn { width: 15px; flex: none; background: #fff; border: 1px solid #ababab; box-sizing: border-box; display: flex; align-items: center; justify-content: center; }
  .hthumb { width: 264px; flex: none; background: #fff; border: 1px solid #ababab; box-sizing: border-box; }
  .htrack { flex: 1; background: #bdbdbd; }

  .status { height: 23px; flex: none; background: #333; display: flex; align-items: center; color: #fff; margin: 0 -1px; }
  .ready { margin-left: 8px; font-size: 10.5px; }
  .view { width: 38px; height: 22px; display: flex; align-items: center; justify-content: center; }
  .view.on { background: #000; margin-left: 539px; }
  .zoomer { margin-left: 5px; display: flex; align-items: center; }
  .zb { position: relative; width: 7px; height: 2px; background: #fff; display: block; }
  .plusz::after { content: ""; position: absolute; left: 2.500px; top: -2.500px; width: 2px; height: 7px; background: #fff; }
  .slider { width: 100px; height: 1px; background: #fff; margin: 0 4px 0 4px; position: relative; }
  .slider i { position: absolute; left: 49px; top: -5px; width: 4px; height: 11px; background: #fff; }
  .pctz { margin-left: 15px; font-size: 11.5px; }
</style>
